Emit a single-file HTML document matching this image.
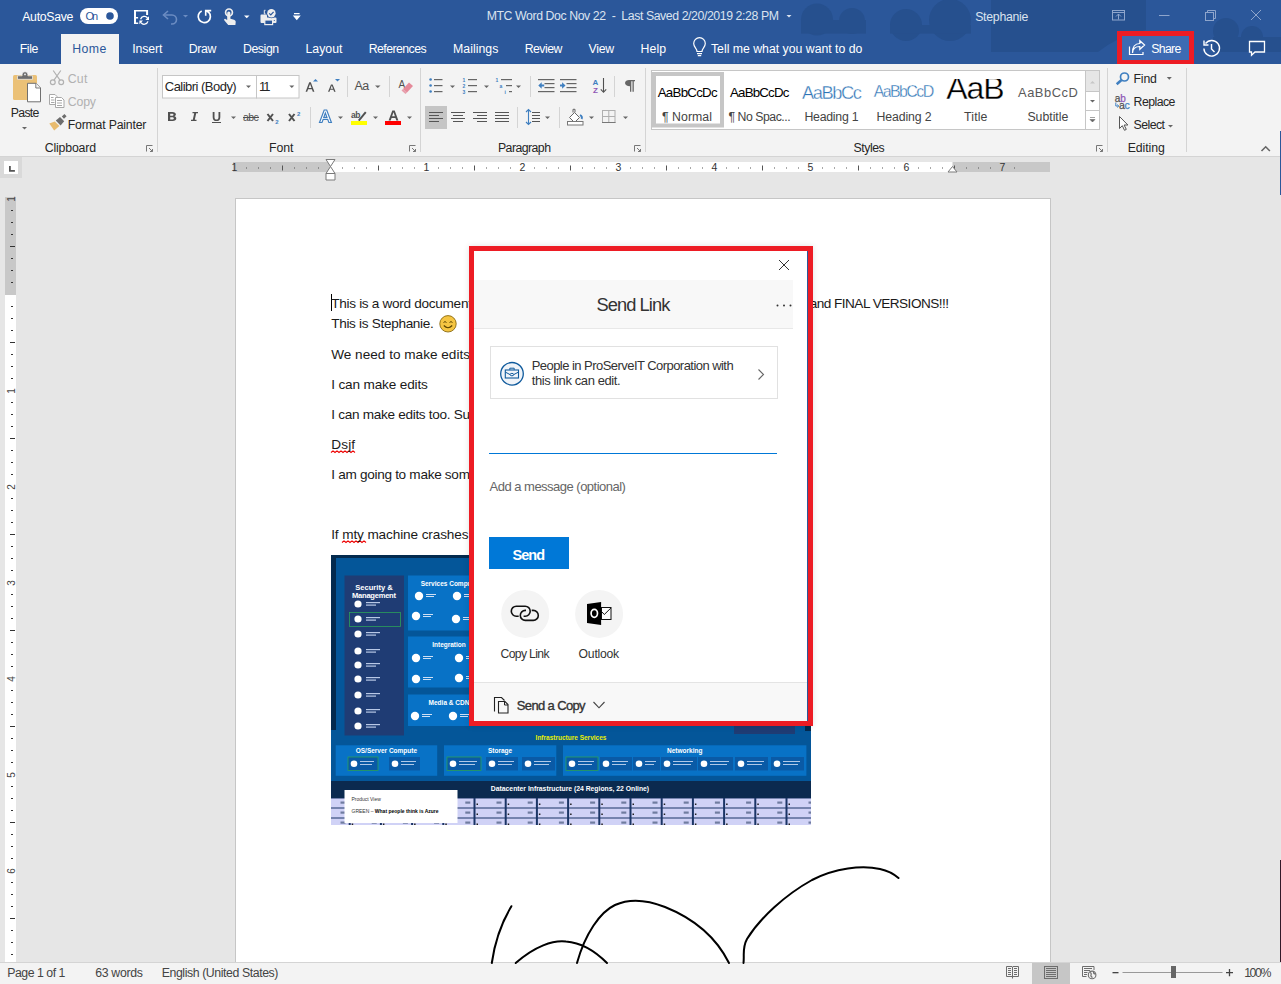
<!DOCTYPE html>
<html><head><meta charset="utf-8">
<style>
*{margin:0;padding:0;box-sizing:border-box}
html,body{width:1281px;height:984px;overflow:hidden;background:#e6e6e6;font-family:"Liberation Sans",sans-serif;position:relative}
.a{position:absolute;white-space:pre}
.r{position:absolute}
svg{position:absolute;overflow:visible}
</style></head><body>
<div class="r" style="left:0;top:0;width:1281px;height:64px;background:#2b579a"></div>
<div class="r" style="left:0;top:64px;width:1281px;height:93px;background:#f3f3f3;border-bottom:1px solid #d4d4d4"></div>
<div class="r" style="left:61px;top:34px;width:58px;height:30px;background:#f3f3f3"></div>
<div class="r" style="left:235px;top:198px;width:816px;height:770px;background:#fff;border:1px solid #c6c6c6"></div>
<div class="r" style="left:0;top:962px;width:1281px;height:22px;background:#f3f3f3;border-top:1px solid #d4d4d4"></div>
<svg style="left:0;top:157px;overflow:hidden" width="1281" height="805" viewBox="0 157 1281 805"><rect x="0" y="157" width="22" height="21" fill="#d9d9d9"/><rect x="4" y="161" width="14" height="13" fill="#fff"/><path d="M9.9 166v4.9h5" fill="none" stroke="#555" stroke-width="1.8"/><rect x="233" y="162" width="817" height="10" fill="#c8c8c8"/><rect x="330.5" y="162" width="622" height="10" fill="#fff"/><rect x="246.0" y="167.5" width="1" height="1" fill="#555"/><rect x="258.0" y="167.5" width="1" height="1" fill="#555"/><rect x="270.0" y="167.5" width="1" height="1" fill="#555"/><rect x="282.0" y="165.5" width="1" height="5" fill="#555"/><rect x="294.0" y="167.5" width="1" height="1" fill="#555"/><rect x="306.0" y="167.5" width="1" height="1" fill="#555"/><rect x="318.0" y="167.5" width="1" height="1" fill="#555"/><rect x="342.0" y="167.5" width="1" height="1" fill="#555"/><rect x="354.0" y="167.5" width="1" height="1" fill="#555"/><rect x="366.0" y="167.5" width="1" height="1" fill="#555"/><rect x="378.0" y="165.5" width="1" height="5" fill="#555"/><rect x="390.0" y="167.5" width="1" height="1" fill="#555"/><rect x="402.0" y="167.5" width="1" height="1" fill="#555"/><rect x="414.0" y="167.5" width="1" height="1" fill="#555"/><rect x="438.0" y="167.5" width="1" height="1" fill="#555"/><rect x="450.0" y="167.5" width="1" height="1" fill="#555"/><rect x="462.0" y="167.5" width="1" height="1" fill="#555"/><rect x="474.0" y="165.5" width="1" height="5" fill="#555"/><rect x="486.0" y="167.5" width="1" height="1" fill="#555"/><rect x="498.0" y="167.5" width="1" height="1" fill="#555"/><rect x="510.0" y="167.5" width="1" height="1" fill="#555"/><rect x="534.0" y="167.5" width="1" height="1" fill="#555"/><rect x="546.0" y="167.5" width="1" height="1" fill="#555"/><rect x="558.0" y="167.5" width="1" height="1" fill="#555"/><rect x="570.0" y="165.5" width="1" height="5" fill="#555"/><rect x="582.0" y="167.5" width="1" height="1" fill="#555"/><rect x="594.0" y="167.5" width="1" height="1" fill="#555"/><rect x="606.0" y="167.5" width="1" height="1" fill="#555"/><rect x="630.0" y="167.5" width="1" height="1" fill="#555"/><rect x="642.0" y="167.5" width="1" height="1" fill="#555"/><rect x="654.0" y="167.5" width="1" height="1" fill="#555"/><rect x="666.0" y="165.5" width="1" height="5" fill="#555"/><rect x="678.0" y="167.5" width="1" height="1" fill="#555"/><rect x="690.0" y="167.5" width="1" height="1" fill="#555"/><rect x="702.0" y="167.5" width="1" height="1" fill="#555"/><rect x="726.0" y="167.5" width="1" height="1" fill="#555"/><rect x="738.0" y="167.5" width="1" height="1" fill="#555"/><rect x="750.0" y="167.5" width="1" height="1" fill="#555"/><rect x="762.0" y="165.5" width="1" height="5" fill="#555"/><rect x="774.0" y="167.5" width="1" height="1" fill="#555"/><rect x="786.0" y="167.5" width="1" height="1" fill="#555"/><rect x="798.0" y="167.5" width="1" height="1" fill="#555"/><rect x="822.0" y="167.5" width="1" height="1" fill="#555"/><rect x="834.0" y="167.5" width="1" height="1" fill="#555"/><rect x="846.0" y="167.5" width="1" height="1" fill="#555"/><rect x="858.0" y="165.5" width="1" height="5" fill="#555"/><rect x="870.0" y="167.5" width="1" height="1" fill="#555"/><rect x="882.0" y="167.5" width="1" height="1" fill="#555"/><rect x="894.0" y="167.5" width="1" height="1" fill="#555"/><rect x="918.0" y="167.5" width="1" height="1" fill="#555"/><rect x="930.0" y="167.5" width="1" height="1" fill="#555"/><rect x="942.0" y="167.5" width="1" height="1" fill="#555"/><rect x="954.0" y="165.5" width="1" height="5" fill="#555"/><rect x="966.0" y="167.5" width="1" height="1" fill="#555"/><rect x="978.0" y="167.5" width="1" height="1" fill="#555"/><rect x="990.0" y="167.5" width="1" height="1" fill="#555"/><rect x="1014.0" y="167.5" width="1" height="1" fill="#555"/><text x="234.5" y="171" font-family="Liberation Sans" font-size="10.5" fill="#333" text-anchor="middle">1</text><text x="426.5" y="171" font-family="Liberation Sans" font-size="10.5" fill="#333" text-anchor="middle">1</text><text x="522.5" y="171" font-family="Liberation Sans" font-size="10.5" fill="#333" text-anchor="middle">2</text><text x="618.5" y="171" font-family="Liberation Sans" font-size="10.5" fill="#333" text-anchor="middle">3</text><text x="714.5" y="171" font-family="Liberation Sans" font-size="10.5" fill="#333" text-anchor="middle">4</text><text x="810.5" y="171" font-family="Liberation Sans" font-size="10.5" fill="#333" text-anchor="middle">5</text><text x="906.5" y="171" font-family="Liberation Sans" font-size="10.5" fill="#333" text-anchor="middle">6</text><text x="1002.5" y="171" font-family="Liberation Sans" font-size="10.5" fill="#333" text-anchor="middle">7</text><path d="M326 159.5h9l-4.5 7zM326 173.5h9l-4.5-7zM326 173.5h9v6.5h-9z" fill="#fff" stroke="#7a7a7a" stroke-width="1"/><path d="M948 172h9l-4.5-5.5z" fill="#fff" stroke="#7a7a7a" stroke-width="1"/><rect x="5" y="197" width="11" height="98" fill="#c8c8c8"/><rect x="5" y="295" width="11" height="667" fill="#fff"/><rect x="11" y="210.0" width="2" height="1" fill="#333"/><rect x="11" y="222.0" width="2" height="1" fill="#333"/><rect x="11" y="234.0" width="2" height="1" fill="#333"/><rect x="10" y="246.0" width="5" height="1" fill="#333"/><rect x="11" y="258.0" width="2" height="1" fill="#333"/><rect x="11" y="270.0" width="2" height="1" fill="#333"/><rect x="11" y="282.0" width="2" height="1" fill="#333"/><rect x="11" y="306.0" width="2" height="1" fill="#333"/><rect x="11" y="318.0" width="2" height="1" fill="#333"/><rect x="11" y="330.0" width="2" height="1" fill="#333"/><rect x="10" y="342.0" width="5" height="1" fill="#333"/><rect x="11" y="354.0" width="2" height="1" fill="#333"/><rect x="11" y="366.0" width="2" height="1" fill="#333"/><rect x="11" y="378.0" width="2" height="1" fill="#333"/><rect x="11" y="402.0" width="2" height="1" fill="#333"/><rect x="11" y="414.0" width="2" height="1" fill="#333"/><rect x="11" y="426.0" width="2" height="1" fill="#333"/><rect x="10" y="438.0" width="5" height="1" fill="#333"/><rect x="11" y="450.0" width="2" height="1" fill="#333"/><rect x="11" y="462.0" width="2" height="1" fill="#333"/><rect x="11" y="474.0" width="2" height="1" fill="#333"/><rect x="11" y="498.0" width="2" height="1" fill="#333"/><rect x="11" y="510.0" width="2" height="1" fill="#333"/><rect x="11" y="522.0" width="2" height="1" fill="#333"/><rect x="10" y="534.0" width="5" height="1" fill="#333"/><rect x="11" y="546.0" width="2" height="1" fill="#333"/><rect x="11" y="558.0" width="2" height="1" fill="#333"/><rect x="11" y="570.0" width="2" height="1" fill="#333"/><rect x="11" y="594.0" width="2" height="1" fill="#333"/><rect x="11" y="606.0" width="2" height="1" fill="#333"/><rect x="11" y="618.0" width="2" height="1" fill="#333"/><rect x="10" y="630.0" width="5" height="1" fill="#333"/><rect x="11" y="642.0" width="2" height="1" fill="#333"/><rect x="11" y="654.0" width="2" height="1" fill="#333"/><rect x="11" y="666.0" width="2" height="1" fill="#333"/><rect x="11" y="690.0" width="2" height="1" fill="#333"/><rect x="11" y="702.0" width="2" height="1" fill="#333"/><rect x="11" y="714.0" width="2" height="1" fill="#333"/><rect x="10" y="726.0" width="5" height="1" fill="#333"/><rect x="11" y="738.0" width="2" height="1" fill="#333"/><rect x="11" y="750.0" width="2" height="1" fill="#333"/><rect x="11" y="762.0" width="2" height="1" fill="#333"/><rect x="11" y="786.0" width="2" height="1" fill="#333"/><rect x="11" y="798.0" width="2" height="1" fill="#333"/><rect x="11" y="810.0" width="2" height="1" fill="#333"/><rect x="10" y="822.0" width="5" height="1" fill="#333"/><rect x="11" y="834.0" width="2" height="1" fill="#333"/><rect x="11" y="846.0" width="2" height="1" fill="#333"/><rect x="11" y="858.0" width="2" height="1" fill="#333"/><rect x="11" y="882.0" width="2" height="1" fill="#333"/><rect x="11" y="894.0" width="2" height="1" fill="#333"/><rect x="11" y="906.0" width="2" height="1" fill="#333"/><rect x="10" y="918.0" width="5" height="1" fill="#333"/><rect x="11" y="930.0" width="2" height="1" fill="#333"/><rect x="11" y="942.0" width="2" height="1" fill="#333"/><rect x="11" y="954.0" width="2" height="1" fill="#333"/><text x="0" y="0" transform="translate(15.2 199.0) rotate(-90)" font-family="Liberation Sans" font-size="10" fill="#444" text-anchor="middle">1</text><text x="0" y="0" transform="translate(15.2 391.0) rotate(-90)" font-family="Liberation Sans" font-size="10" fill="#444" text-anchor="middle">1</text><text x="0" y="0" transform="translate(15.2 487.0) rotate(-90)" font-family="Liberation Sans" font-size="10" fill="#444" text-anchor="middle">2</text><text x="0" y="0" transform="translate(15.2 583.0) rotate(-90)" font-family="Liberation Sans" font-size="10" fill="#444" text-anchor="middle">3</text><text x="0" y="0" transform="translate(15.2 679.0) rotate(-90)" font-family="Liberation Sans" font-size="10" fill="#444" text-anchor="middle">4</text><text x="0" y="0" transform="translate(15.2 775.0) rotate(-90)" font-family="Liberation Sans" font-size="10" fill="#444" text-anchor="middle">5</text><text x="0" y="0" transform="translate(15.2 871.0) rotate(-90)" font-family="Liberation Sans" font-size="10" fill="#444" text-anchor="middle">6</text></svg>
<div class="r" style="left:1279.5px;top:131px;width:2px;height:64px;background:#2b579a"></div><div class="r" style="left:1280px;top:860px;width:1px;height:102px;background:#301828"></div>
<svg style="left:0;top:0" width="1" height="1">
<rect x="331" y="294" width="1" height="17" fill="#000"/>
<circle cx="448" cy="323.8" r="8.2" fill="#f5c542" stroke="#8a6a10" stroke-width="0.9"/>
<path d="M443.5 322.5q1.5-1.8 3 0M449.5 322.5q1.5-1.8 3 0" fill="none" stroke="#5a4300" stroke-width="1"/>
<path d="M443.8 325.5q4.2 4.5 8.4 0" fill="none" stroke="#5a4300" stroke-width="1.1"/>
<path d="M331 452.5l2-1.6 2 1.6 2-1.6 2 1.6 2-1.6 2 1.6 2-1.6 2 1.6 2-1.6 2 1.6 2-1.6 2 1.6" fill="none" stroke="#e00" stroke-width="1.2"/>
<path d="M342 542.5l2-1.6 2 1.6 2-1.6 2 1.6 2-1.6 2 1.6 2-1.6 2 1.6 2-1.6 2 1.6 2-1.6 2 1.6" fill="none" stroke="#e00" stroke-width="1.2"/>
<g fill="none" stroke="#000" stroke-width="2" stroke-linecap="round">
<path d="M511.4 906.2C502 922 495 940 491.8 963"/>
<path d="M515.7 963C535 946 553 940 566 941.5C585 943 598 954 607 963"/>
<path d="M577 963C585 934 600 912 615 905C628 899 645 899 665 907C690 917 715 935 729 963"/>
<path d="M743.5 963C744.5 955 742 948 747 939C760 918 785 895 812 880C835 868 862 865 880 869C889 871 895 875 898.5 878"/>
</g>
</svg>
<svg style="left:331px;top:555px;overflow:hidden" width="480" height="270" viewBox="331 555 480 270"><rect x="331" y="555" width="480" height="270" fill="#032a4e"/><rect x="336" y="558" width="469" height="223" fill="#045699"/><rect x="344.5" y="575.5" width="59.5" height="160" fill="#1f3c74"/><text x="374" y="590" font-family="Liberation Sans" font-size="7.6" font-weight="bold" fill="#fff" text-anchor="middle">Security &amp;</text><text x="374" y="598" font-family="Liberation Sans" font-size="7.6" font-weight="bold" fill="#fff" text-anchor="middle" textLength="44">Management</text><circle cx="358" cy="604" r="3.6" fill="#fff"/><rect x="366" y="602" width="14" height="1.2" fill="#b8c8e6"/><rect x="366" y="604.5" width="10" height="1.2" fill="#b8c8e6"/><circle cx="358" cy="619" r="3.6" fill="#fff"/><rect x="366" y="617" width="14" height="1.2" fill="#b8c8e6"/><rect x="366" y="619.5" width="10" height="1.2" fill="#b8c8e6"/><circle cx="358" cy="634" r="3.6" fill="#fff"/><rect x="366" y="632" width="14" height="1.2" fill="#b8c8e6"/><rect x="366" y="634.5" width="10" height="1.2" fill="#b8c8e6"/><circle cx="358" cy="651" r="3.6" fill="#fff"/><rect x="366" y="649" width="14" height="1.2" fill="#b8c8e6"/><rect x="366" y="651.5" width="10" height="1.2" fill="#b8c8e6"/><circle cx="358" cy="665" r="3.6" fill="#fff"/><rect x="366" y="663" width="14" height="1.2" fill="#b8c8e6"/><rect x="366" y="665.5" width="10" height="1.2" fill="#b8c8e6"/><circle cx="358" cy="679" r="3.6" fill="#fff"/><rect x="366" y="677" width="14" height="1.2" fill="#b8c8e6"/><rect x="366" y="679.5" width="10" height="1.2" fill="#b8c8e6"/><circle cx="358" cy="695" r="3.6" fill="#fff"/><rect x="366" y="693" width="14" height="1.2" fill="#b8c8e6"/><rect x="366" y="695.5" width="10" height="1.2" fill="#b8c8e6"/><circle cx="358" cy="711" r="3.6" fill="#fff"/><rect x="366" y="709" width="14" height="1.2" fill="#b8c8e6"/><rect x="366" y="711.5" width="10" height="1.2" fill="#b8c8e6"/><circle cx="358" cy="726" r="3.6" fill="#fff"/><rect x="366" y="724" width="14" height="1.2" fill="#b8c8e6"/><rect x="366" y="726.5" width="10" height="1.2" fill="#b8c8e6"/><rect x="349.5" y="612.5" width="51" height="14" fill="none" stroke="#2aa05a" stroke-width="0.8"/><rect x="408" y="575.5" width="140" height="55.0" fill="#0872c6"/><text x="449" y="585.5" font-family="Liberation Sans" font-size="6.5" font-weight="bold" fill="#fff" text-anchor="middle">Services Compute</text><rect x="408" y="636.5" width="140" height="51.0" fill="#0872c6"/><text x="449" y="646.5" font-family="Liberation Sans" font-size="6.5" font-weight="bold" fill="#fff" text-anchor="middle">Integration</text><rect x="408" y="694.5" width="140" height="31.5" fill="#0872c6"/><text x="449" y="704.5" font-family="Liberation Sans" font-size="6.5" font-weight="bold" fill="#fff" text-anchor="middle">Media &amp; CDN</text><circle cx="419" cy="596" r="4.2" fill="#fff"/><rect x="426" y="594" width="10" height="1" fill="#cfe0f5"/><rect x="426" y="596" width="8" height="1" fill="#cfe0f5"/><circle cx="457" cy="596" r="4.2" fill="#fff"/><rect x="464" y="594" width="10" height="1" fill="#cfe0f5"/><rect x="464" y="596" width="8" height="1" fill="#cfe0f5"/><circle cx="416" cy="616" r="4.2" fill="#fff"/><rect x="423" y="614" width="10" height="1" fill="#cfe0f5"/><rect x="423" y="616" width="8" height="1" fill="#cfe0f5"/><circle cx="456" cy="619" r="4.2" fill="#fff"/><rect x="463" y="617" width="10" height="1" fill="#cfe0f5"/><rect x="463" y="619" width="8" height="1" fill="#cfe0f5"/><circle cx="416" cy="658" r="4.2" fill="#fff"/><rect x="423" y="656" width="10" height="1" fill="#cfe0f5"/><rect x="423" y="658" width="8" height="1" fill="#cfe0f5"/><circle cx="459" cy="658" r="4.2" fill="#fff"/><rect x="466" y="656" width="10" height="1" fill="#cfe0f5"/><rect x="466" y="658" width="8" height="1" fill="#cfe0f5"/><circle cx="416" cy="679" r="4.2" fill="#fff"/><rect x="423" y="677" width="10" height="1" fill="#cfe0f5"/><rect x="423" y="679" width="8" height="1" fill="#cfe0f5"/><circle cx="459" cy="678" r="4.2" fill="#fff"/><rect x="466" y="676" width="10" height="1" fill="#cfe0f5"/><rect x="466" y="678" width="8" height="1" fill="#cfe0f5"/><circle cx="415" cy="716" r="4.2" fill="#fff"/><rect x="422" y="714" width="10" height="1" fill="#cfe0f5"/><rect x="422" y="716" width="8" height="1" fill="#cfe0f5"/><circle cx="453" cy="716" r="4.2" fill="#fff"/><rect x="460" y="714" width="10" height="1" fill="#cfe0f5"/><rect x="460" y="716" width="8" height="1" fill="#cfe0f5"/><rect x="734" y="722" width="61" height="12" fill="#1f3c74"/><rect x="805" y="555" width="6" height="176" fill="#032a4e"/><rect x="331" y="730" width="480" height="51" fill="#045699"/><rect x="344.5" y="730" width="59.5" height="5.5" fill="#1f3c74"/><rect x="734" y="730" width="61" height="4" fill="#1f3c74"/><rect x="805" y="730" width="6" height="1" fill="#032a4e"/><text x="571" y="740" font-family="Liberation Sans" font-size="6.5" font-weight="bold" fill="#e8f000" text-anchor="middle">Infrastructure Services</text><rect x="335.7" y="745.3" width="101.5" height="30.5" fill="#0872c6"/><text x="386.4" y="753" font-family="Liberation Sans" font-size="6.5" font-weight="bold" fill="#fff" text-anchor="middle">OS/Server Compute</text><rect x="348" y="757" width="30" height="13.5" fill="#0a5aa6"/><circle cx="354" cy="763.7" r="3.3" fill="#fff"/><rect x="360" y="761" width="14" height="1" fill="#b0c8e8"/><rect x="360" y="764" width="12" height="1" fill="#b0c8e8"/><rect x="389" y="757" width="31" height="13.5" fill="#0a5aa6"/><circle cx="395" cy="763.7" r="3.3" fill="#fff"/><rect x="401" y="761" width="15" height="1" fill="#b0c8e8"/><rect x="401" y="764" width="13" height="1" fill="#b0c8e8"/><rect x="444" y="745.3" width="112.29999999999995" height="30.5" fill="#0872c6"/><text x="500.1" y="753" font-family="Liberation Sans" font-size="6.5" font-weight="bold" fill="#fff" text-anchor="middle">Storage</text><rect x="447" y="757" width="34" height="13.5" fill="#0a5aa6"/><circle cx="453" cy="763.7" r="3.3" fill="#fff"/><rect x="459" y="761" width="18" height="1" fill="#b0c8e8"/><rect x="459" y="764" width="16" height="1" fill="#b0c8e8"/><rect x="486" y="757" width="32" height="13.5" fill="#0a5aa6"/><circle cx="492" cy="763.7" r="3.3" fill="#fff"/><rect x="498" y="761" width="16" height="1" fill="#b0c8e8"/><rect x="498" y="764" width="14" height="1" fill="#b0c8e8"/><rect x="522" y="757" width="33" height="13.5" fill="#0a5aa6"/><circle cx="528" cy="763.7" r="3.3" fill="#fff"/><rect x="534" y="761" width="17" height="1" fill="#b0c8e8"/><rect x="534" y="764" width="15" height="1" fill="#b0c8e8"/><rect x="563" y="745.3" width="243.39999999999998" height="30.5" fill="#0872c6"/><text x="684.7" y="753" font-family="Liberation Sans" font-size="6.5" font-weight="bold" fill="#fff" text-anchor="middle">Networking</text><rect x="566" y="757" width="32" height="13.5" fill="#0a5aa6"/><circle cx="572" cy="763.7" r="3.3" fill="#fff"/><rect x="578" y="761" width="16" height="1" fill="#b0c8e8"/><rect x="578" y="764" width="14" height="1" fill="#b0c8e8"/><rect x="600" y="757" width="32" height="13.5" fill="#0a5aa6"/><circle cx="606" cy="763.7" r="3.3" fill="#fff"/><rect x="612" y="761" width="16" height="1" fill="#b0c8e8"/><rect x="612" y="764" width="14" height="1" fill="#b0c8e8"/><rect x="633" y="757" width="27" height="13.5" fill="#0a5aa6"/><circle cx="639" cy="763.7" r="3.3" fill="#fff"/><rect x="645" y="761" width="11" height="1" fill="#b0c8e8"/><rect x="645" y="764" width="9" height="1" fill="#b0c8e8"/><rect x="661" y="757" width="36" height="13.5" fill="#0a5aa6"/><circle cx="667" cy="763.7" r="3.3" fill="#fff"/><rect x="673" y="761" width="20" height="1" fill="#b0c8e8"/><rect x="673" y="764" width="18" height="1" fill="#b0c8e8"/><rect x="698" y="757" width="35" height="13.5" fill="#0a5aa6"/><circle cx="704" cy="763.7" r="3.3" fill="#fff"/><rect x="710" y="761" width="19" height="1" fill="#b0c8e8"/><rect x="710" y="764" width="17" height="1" fill="#b0c8e8"/><rect x="735" y="757" width="33" height="13.5" fill="#0a5aa6"/><circle cx="741" cy="763.7" r="3.3" fill="#fff"/><rect x="747" y="761" width="17" height="1" fill="#b0c8e8"/><rect x="747" y="764" width="15" height="1" fill="#b0c8e8"/><rect x="771" y="757" width="33" height="13.5" fill="#0a5aa6"/><circle cx="777" cy="763.7" r="3.3" fill="#fff"/><rect x="783" y="761" width="17" height="1" fill="#b0c8e8"/><rect x="783" y="764" width="15" height="1" fill="#b0c8e8"/><rect x="348" y="757" width="30" height="13.5" fill="none" stroke="#2aa05a" stroke-width="0.8"/><rect x="447" y="757" width="34" height="13.5" fill="none" stroke="#2aa05a" stroke-width="0.8"/><rect x="566" y="757" width="32" height="13.5" fill="none" stroke="#2aa05a" stroke-width="0.8"/><rect x="331" y="781" width="480" height="17" fill="#0b2a4f"/><text x="570" y="790.5" font-family="Liberation Sans" font-size="6.8" font-weight="bold" fill="#fff" text-anchor="middle">Datacenter Infrastructure (24 Regions, 22 Online)</text><rect x="331" y="798" width="480" height="27" fill="#1b3566"/><rect x="288.3" y="798.5" width="29.2" height="9" fill="#d0d2f6"/><rect x="309.3" y="801.5" width="5" height="2.2" fill="#707ca0"/><rect x="289.3" y="803.5" width="1.5" height="1.5" fill="#222"/><rect x="319.5" y="798.5" width="29.2" height="9" fill="#d0d2f6"/><rect x="340.5" y="801.5" width="5" height="2.2" fill="#707ca0"/><rect x="320.5" y="803.5" width="1.5" height="1.5" fill="#222"/><rect x="350.7" y="798.5" width="29.2" height="9" fill="#d0d2f6"/><rect x="371.7" y="801.5" width="5" height="2.2" fill="#707ca0"/><rect x="351.7" y="803.5" width="1.5" height="1.5" fill="#222"/><rect x="381.9" y="798.5" width="29.2" height="9" fill="#d0d2f6"/><rect x="402.9" y="801.5" width="5" height="2.2" fill="#707ca0"/><rect x="382.9" y="803.5" width="1.5" height="1.5" fill="#222"/><rect x="413.1" y="798.5" width="29.2" height="9" fill="#d0d2f6"/><rect x="434.1" y="801.5" width="5" height="2.2" fill="#707ca0"/><rect x="414.1" y="803.5" width="1.5" height="1.5" fill="#222"/><rect x="444.3" y="798.5" width="29.2" height="9" fill="#d0d2f6"/><rect x="465.3" y="801.5" width="5" height="2.2" fill="#707ca0"/><rect x="445.3" y="803.5" width="1.5" height="1.5" fill="#222"/><rect x="475.5" y="798.5" width="29.2" height="9" fill="#d0d2f6"/><rect x="496.5" y="801.5" width="5" height="2.2" fill="#707ca0"/><rect x="476.5" y="803.5" width="1.5" height="1.5" fill="#222"/><rect x="506.7" y="798.5" width="29.2" height="9" fill="#d0d2f6"/><rect x="527.7" y="801.5" width="5" height="2.2" fill="#707ca0"/><rect x="507.7" y="803.5" width="1.5" height="1.5" fill="#222"/><rect x="537.9" y="798.5" width="29.2" height="9" fill="#d0d2f6"/><rect x="558.9" y="801.5" width="5" height="2.2" fill="#707ca0"/><rect x="538.9" y="803.5" width="1.5" height="1.5" fill="#222"/><rect x="569.1" y="798.5" width="29.2" height="9" fill="#d0d2f6"/><rect x="590.1" y="801.5" width="5" height="2.2" fill="#707ca0"/><rect x="570.1" y="803.5" width="1.5" height="1.5" fill="#222"/><rect x="600.3" y="798.5" width="29.2" height="9" fill="#d0d2f6"/><rect x="621.3" y="801.5" width="5" height="2.2" fill="#707ca0"/><rect x="601.3" y="803.5" width="1.5" height="1.5" fill="#222"/><rect x="631.5" y="798.5" width="29.2" height="9" fill="#d0d2f6"/><rect x="652.5" y="801.5" width="5" height="2.2" fill="#707ca0"/><rect x="632.5" y="803.5" width="1.5" height="1.5" fill="#222"/><rect x="662.7" y="798.5" width="29.2" height="9" fill="#d0d2f6"/><rect x="683.7" y="801.5" width="5" height="2.2" fill="#707ca0"/><rect x="663.7" y="803.5" width="1.5" height="1.5" fill="#222"/><rect x="693.9" y="798.5" width="29.2" height="9" fill="#d0d2f6"/><rect x="714.9" y="801.5" width="5" height="2.2" fill="#707ca0"/><rect x="694.9" y="803.5" width="1.5" height="1.5" fill="#222"/><rect x="725.1" y="798.5" width="29.2" height="9" fill="#d0d2f6"/><rect x="746.1" y="801.5" width="5" height="2.2" fill="#707ca0"/><rect x="726.1" y="803.5" width="1.5" height="1.5" fill="#222"/><rect x="756.3" y="798.5" width="29.2" height="9" fill="#d0d2f6"/><rect x="777.3" y="801.5" width="5" height="2.2" fill="#707ca0"/><rect x="757.3" y="803.5" width="1.5" height="1.5" fill="#222"/><rect x="787.5" y="798.5" width="29.2" height="9" fill="#d0d2f6"/><rect x="808.5" y="801.5" width="5" height="2.2" fill="#707ca0"/><rect x="788.5" y="803.5" width="1.5" height="1.5" fill="#222"/><rect x="288.3" y="808.5" width="29.2" height="9" fill="#d0d2f6"/><rect x="309.3" y="811.5" width="5" height="2.2" fill="#707ca0"/><rect x="289.3" y="813.5" width="1.5" height="1.5" fill="#222"/><rect x="319.5" y="808.5" width="29.2" height="9" fill="#d0d2f6"/><rect x="340.5" y="811.5" width="5" height="2.2" fill="#707ca0"/><rect x="320.5" y="813.5" width="1.5" height="1.5" fill="#222"/><rect x="350.7" y="808.5" width="29.2" height="9" fill="#d0d2f6"/><rect x="371.7" y="811.5" width="5" height="2.2" fill="#707ca0"/><rect x="351.7" y="813.5" width="1.5" height="1.5" fill="#222"/><rect x="381.9" y="808.5" width="29.2" height="9" fill="#d0d2f6"/><rect x="402.9" y="811.5" width="5" height="2.2" fill="#707ca0"/><rect x="382.9" y="813.5" width="1.5" height="1.5" fill="#222"/><rect x="413.1" y="808.5" width="29.2" height="9" fill="#d0d2f6"/><rect x="434.1" y="811.5" width="5" height="2.2" fill="#707ca0"/><rect x="414.1" y="813.5" width="1.5" height="1.5" fill="#222"/><rect x="444.3" y="808.5" width="29.2" height="9" fill="#d0d2f6"/><rect x="465.3" y="811.5" width="5" height="2.2" fill="#707ca0"/><rect x="445.3" y="813.5" width="1.5" height="1.5" fill="#222"/><rect x="475.5" y="808.5" width="29.2" height="9" fill="#d0d2f6"/><rect x="496.5" y="811.5" width="5" height="2.2" fill="#707ca0"/><rect x="476.5" y="813.5" width="1.5" height="1.5" fill="#222"/><rect x="506.7" y="808.5" width="29.2" height="9" fill="#d0d2f6"/><rect x="527.7" y="811.5" width="5" height="2.2" fill="#707ca0"/><rect x="507.7" y="813.5" width="1.5" height="1.5" fill="#222"/><rect x="537.9" y="808.5" width="29.2" height="9" fill="#d0d2f6"/><rect x="558.9" y="811.5" width="5" height="2.2" fill="#707ca0"/><rect x="538.9" y="813.5" width="1.5" height="1.5" fill="#222"/><rect x="569.1" y="808.5" width="29.2" height="9" fill="#d0d2f6"/><rect x="590.1" y="811.5" width="5" height="2.2" fill="#707ca0"/><rect x="570.1" y="813.5" width="1.5" height="1.5" fill="#222"/><rect x="600.3" y="808.5" width="29.2" height="9" fill="#d0d2f6"/><rect x="621.3" y="811.5" width="5" height="2.2" fill="#707ca0"/><rect x="601.3" y="813.5" width="1.5" height="1.5" fill="#222"/><rect x="631.5" y="808.5" width="29.2" height="9" fill="#d0d2f6"/><rect x="652.5" y="811.5" width="5" height="2.2" fill="#707ca0"/><rect x="632.5" y="813.5" width="1.5" height="1.5" fill="#222"/><rect x="662.7" y="808.5" width="29.2" height="9" fill="#d0d2f6"/><rect x="683.7" y="811.5" width="5" height="2.2" fill="#707ca0"/><rect x="663.7" y="813.5" width="1.5" height="1.5" fill="#222"/><rect x="693.9" y="808.5" width="29.2" height="9" fill="#d0d2f6"/><rect x="714.9" y="811.5" width="5" height="2.2" fill="#707ca0"/><rect x="694.9" y="813.5" width="1.5" height="1.5" fill="#222"/><rect x="725.1" y="808.5" width="29.2" height="9" fill="#d0d2f6"/><rect x="746.1" y="811.5" width="5" height="2.2" fill="#707ca0"/><rect x="726.1" y="813.5" width="1.5" height="1.5" fill="#222"/><rect x="756.3" y="808.5" width="29.2" height="9" fill="#d0d2f6"/><rect x="777.3" y="811.5" width="5" height="2.2" fill="#707ca0"/><rect x="757.3" y="813.5" width="1.5" height="1.5" fill="#222"/><rect x="787.5" y="808.5" width="29.2" height="9" fill="#d0d2f6"/><rect x="808.5" y="811.5" width="5" height="2.2" fill="#707ca0"/><rect x="788.5" y="813.5" width="1.5" height="1.5" fill="#222"/><rect x="288.3" y="818.5" width="29.2" height="9" fill="#d0d2f6"/><rect x="309.3" y="821.5" width="5" height="2.2" fill="#707ca0"/><rect x="289.3" y="823.5" width="1.5" height="1.5" fill="#222"/><rect x="319.5" y="818.5" width="29.2" height="9" fill="#d0d2f6"/><rect x="340.5" y="821.5" width="5" height="2.2" fill="#707ca0"/><rect x="320.5" y="823.5" width="1.5" height="1.5" fill="#222"/><rect x="350.7" y="818.5" width="29.2" height="9" fill="#d0d2f6"/><rect x="371.7" y="821.5" width="5" height="2.2" fill="#707ca0"/><rect x="351.7" y="823.5" width="1.5" height="1.5" fill="#222"/><rect x="381.9" y="818.5" width="29.2" height="9" fill="#d0d2f6"/><rect x="402.9" y="821.5" width="5" height="2.2" fill="#707ca0"/><rect x="382.9" y="823.5" width="1.5" height="1.5" fill="#222"/><rect x="413.1" y="818.5" width="29.2" height="9" fill="#d0d2f6"/><rect x="434.1" y="821.5" width="5" height="2.2" fill="#707ca0"/><rect x="414.1" y="823.5" width="1.5" height="1.5" fill="#222"/><rect x="444.3" y="818.5" width="29.2" height="9" fill="#d0d2f6"/><rect x="465.3" y="821.5" width="5" height="2.2" fill="#707ca0"/><rect x="445.3" y="823.5" width="1.5" height="1.5" fill="#222"/><rect x="475.5" y="818.5" width="29.2" height="9" fill="#d0d2f6"/><rect x="496.5" y="821.5" width="5" height="2.2" fill="#707ca0"/><rect x="476.5" y="823.5" width="1.5" height="1.5" fill="#222"/><rect x="506.7" y="818.5" width="29.2" height="9" fill="#d0d2f6"/><rect x="527.7" y="821.5" width="5" height="2.2" fill="#707ca0"/><rect x="507.7" y="823.5" width="1.5" height="1.5" fill="#222"/><rect x="537.9" y="818.5" width="29.2" height="9" fill="#d0d2f6"/><rect x="558.9" y="821.5" width="5" height="2.2" fill="#707ca0"/><rect x="538.9" y="823.5" width="1.5" height="1.5" fill="#222"/><rect x="569.1" y="818.5" width="29.2" height="9" fill="#d0d2f6"/><rect x="590.1" y="821.5" width="5" height="2.2" fill="#707ca0"/><rect x="570.1" y="823.5" width="1.5" height="1.5" fill="#222"/><rect x="600.3" y="818.5" width="29.2" height="9" fill="#d0d2f6"/><rect x="621.3" y="821.5" width="5" height="2.2" fill="#707ca0"/><rect x="601.3" y="823.5" width="1.5" height="1.5" fill="#222"/><rect x="631.5" y="818.5" width="29.2" height="9" fill="#d0d2f6"/><rect x="652.5" y="821.5" width="5" height="2.2" fill="#707ca0"/><rect x="632.5" y="823.5" width="1.5" height="1.5" fill="#222"/><rect x="662.7" y="818.5" width="29.2" height="9" fill="#d0d2f6"/><rect x="683.7" y="821.5" width="5" height="2.2" fill="#707ca0"/><rect x="663.7" y="823.5" width="1.5" height="1.5" fill="#222"/><rect x="693.9" y="818.5" width="29.2" height="9" fill="#d0d2f6"/><rect x="714.9" y="821.5" width="5" height="2.2" fill="#707ca0"/><rect x="694.9" y="823.5" width="1.5" height="1.5" fill="#222"/><rect x="725.1" y="818.5" width="29.2" height="9" fill="#d0d2f6"/><rect x="746.1" y="821.5" width="5" height="2.2" fill="#707ca0"/><rect x="726.1" y="823.5" width="1.5" height="1.5" fill="#222"/><rect x="756.3" y="818.5" width="29.2" height="9" fill="#d0d2f6"/><rect x="777.3" y="821.5" width="5" height="2.2" fill="#707ca0"/><rect x="757.3" y="823.5" width="1.5" height="1.5" fill="#222"/><rect x="787.5" y="818.5" width="29.2" height="9" fill="#d0d2f6"/><rect x="808.5" y="821.5" width="5" height="2.2" fill="#707ca0"/><rect x="788.5" y="823.5" width="1.5" height="1.5" fill="#222"/><rect x="344.5" y="790" width="113" height="33" fill="#fff"/><text x="351.5" y="800.5" font-family="Liberation Sans" font-size="5" fill="#333">Product View</text><text x="351.5" y="812.5" font-family="Liberation Sans" font-size="5" fill="#333">GREEN – <tspan font-weight="bold" fill="#000">What people think is Azure</tspan></text></svg>
<div class="a" style="left:331.20px;top:296.94px;font-size:13.6px;line-height:13.6px;color:#1a1a1a;font-weight:400;font-family:'Liberation Sans',sans-serif;letter-spacing:-0.3px">This is a word document that we are</div>
<div class="a" style="left:809.70px;top:296.94px;font-size:13.6px;line-height:13.6px;color:#1a1a1a;font-weight:400;font-family:'Liberation Sans',sans-serif;letter-spacing:-0.524px;">and FINAL VERSIONS!!!</div>
<div class="a" style="left:331.20px;top:317.44px;font-size:13.6px;line-height:13.6px;color:#1a1a1a;font-weight:400;font-family:'Liberation Sans',sans-serif;letter-spacing:-0.318px;">This is Stephanie.</div>
<div class="a" style="left:331.20px;top:347.64px;font-size:13.6px;line-height:13.6px;color:#1a1a1a;font-weight:400;font-family:'Liberation Sans',sans-serif;letter-spacing:0.003px;">We need to make edits</div>
<div class="a" style="left:331.20px;top:377.54px;font-size:13.6px;line-height:13.6px;color:#1a1a1a;font-weight:400;font-family:'Liberation Sans',sans-serif;letter-spacing:-0.155px;">I can make edits</div>
<div class="a" style="left:331.20px;top:408.04px;font-size:13.6px;line-height:13.6px;color:#1a1a1a;font-weight:400;font-family:'Liberation Sans',sans-serif;letter-spacing:-0.3px">I can make edits too. Sure</div>
<div class="a" style="left:331.20px;top:437.94px;font-size:13.6px;line-height:13.6px;color:#1a1a1a;font-weight:400;font-family:'Liberation Sans',sans-serif;letter-spacing:0.179px;">Dsjf</div>
<div class="a" style="left:331.20px;top:467.84px;font-size:13.6px;line-height:13.6px;color:#1a1a1a;font-weight:400;font-family:'Liberation Sans',sans-serif;letter-spacing:-0.3px">I am going to make some</div>
<div class="a" style="left:331.20px;top:527.64px;font-size:13.6px;line-height:13.6px;color:#1a1a1a;font-weight:400;font-family:'Liberation Sans',sans-serif;letter-spacing:-0.115px;">If mty machine crashes</div>
<div class="r" style="left:469px;top:246px;width:344px;height:480px;border:5px solid #ed1c24;background:#fff;box-shadow:0 0 6px rgba(0,0,0,0.12)"></div>
<div class="r" style="left:474px;top:280px;width:319px;height:49px;background:#f8f8f8;border-bottom:1px solid #e8e8e8"></div>
<div class="r" style="left:807px;top:251px;width:1px;height:470px;background:#2b579a"></div>
<div class="r" style="left:474px;top:682px;width:333px;height:39px;background:#f8f8f8;border-top:1px solid #e4e4e4"></div>
<div class="r" style="left:489.5px;top:345.5px;width:288px;height:53px;border:1px solid #e1e1e1;background:#fff"></div>
<div class="r" style="left:489px;top:452.5px;width:288px;height:1.5px;background:#0078d7"></div>
<div class="r" style="left:489px;top:537px;width:80px;height:32px;background:#0078d7"></div>
<svg style="left:0;top:0" width="1" height="1">
<path d="M779 260l10 10M789 260l-10 10" stroke="#333" stroke-width="1"/>
<g fill="#333"><circle cx="777.5" cy="305.5" r="1"/><circle cx="784" cy="305.5" r="1"/><circle cx="790.5" cy="305.5" r="1"/></g>
<circle cx="512" cy="373.8" r="11.3" fill="#f0f4f9" stroke="#0f5a9c" stroke-width="1.3"/>
<rect x="505.3" y="370" width="13.2" height="8" fill="none" stroke="#0f5a9c" stroke-width="1.1"/>
<path d="M509.8 369.8v-1.6h4.4v1.6M505.5 372.2l4.6 2.4M518.3 372.2l-4.6 2.4" fill="none" stroke="#0f5a9c" stroke-width="1"/>
<ellipse cx="511.9" cy="374.6" rx="1.8" ry="1.2" fill="none" stroke="#0f5a9c" stroke-width="1"/>
<path d="M758.5 369.5l5 5-5 5" fill="none" stroke="#666" stroke-width="1.1"/>
<circle cx="525.2" cy="613.9" r="24" fill="#f4f4f4"/>
<circle cx="599.1" cy="613.9" r="24" fill="#f4f4f4"/>
<g fill="none" stroke="#111" stroke-width="1.6">
<path d="M518.7 616.2H516.3A5 5 0 0 1 516.3 606.2H525.2A5 5 0 0 1 525.2 616.2H523.6"/>
<path d="M531.7 610.4H533.3A5 5 0 0 1 533.3 620.4H525.3A5 5 0 0 1 525.3 610.4H526"/>
</g>
<rect x="601.5" y="607.5" width="9.5" height="12" fill="#fff" stroke="#111" stroke-width="1"/>
<path d="M601.5 611.5l2.8 3 6.7-6.6" fill="none" stroke="#111" stroke-width="1"/>
<path d="M587 604l14.1-2.1v23.1l-14.1-2.1z" fill="#000"/>
<ellipse cx="594.3" cy="613.3" rx="3.2" ry="4" fill="none" stroke="#fff" stroke-width="1.7"/>
<path d="M494.5 711.5v-14h7l3 3" fill="none" stroke="#222" stroke-width="1.1"/>
<path d="M498.5 701.5h6.5l3 3v8.5h-9.5z" fill="#f8f8f8" stroke="#222" stroke-width="1.1"/><path d="M504.5 701.5v3.5h3.5" fill="none" stroke="#222" stroke-width="1"/>
<path d="M593.5 702l5.5 5.8 5.5-5.8" fill="none" stroke="#444" stroke-width="1.1"/>
</svg>
<div class="a" style="left:596.40px;top:296.05px;font-size:18.3px;line-height:18.3px;color:#333;font-weight:400;font-family:'Liberation Sans',sans-serif;letter-spacing:-0.910px;">Send Link</div>
<div class="a" style="left:531.70px;top:358.75px;font-size:13px;line-height:13px;color:#333;font-weight:400;font-family:'Liberation Sans',sans-serif;letter-spacing:-0.545px;">People in ProServeIT Corporation with</div>
<div class="a" style="left:531.70px;top:374.15px;font-size:13px;line-height:13px;color:#333;font-weight:400;font-family:'Liberation Sans',sans-serif;letter-spacing:-0.395px;">this link can edit.</div>
<div class="a" style="left:489.60px;top:479.95px;font-size:13px;line-height:13px;color:#666;font-weight:400;font-family:'Liberation Sans',sans-serif;letter-spacing:-0.515px;">Add a message (optional)</div>
<div class="a" style="left:512.60px;top:547.57px;font-size:14.5px;line-height:14.5px;color:#fff;font-weight:700;font-family:'Liberation Sans',sans-serif;letter-spacing:-1.001px;">Send</div>
<div class="a" style="left:500.50px;top:648.43px;font-size:12.2px;line-height:12.2px;color:#333;font-weight:400;font-family:'Liberation Sans',sans-serif;letter-spacing:-0.648px;">Copy Link</div>
<div class="a" style="left:578.60px;top:648.43px;font-size:12.2px;line-height:12.2px;color:#333;font-weight:400;font-family:'Liberation Sans',sans-serif;letter-spacing:-0.233px;">Outlook</div>
<div class="a" style="left:516.80px;top:698.95px;font-size:13px;line-height:13px;color:#333;font-weight:400;font-family:'Liberation Sans',sans-serif;letter-spacing:-0.637px;-webkit-text-stroke:0.35px #333;">Send a Copy</div>
<svg style="left:0;top:0;overflow:hidden" width="1281" height="64" viewBox="0 0 1281 64">
<g fill="#26508e">
<circle cx="817" cy="19.5" r="16"/><circle cx="852" cy="21" r="13"/><rect x="801" y="20" width="65" height="13.6"/>
<circle cx="906" cy="25" r="16"/><circle cx="950" cy="20" r="21"/><rect x="890" y="25" width="81" height="8.6"/>
<path d="M991 0H1146V30Q1118 36 1098 52H991z"/>
<circle cx="1226" cy="31" r="13"/><circle cx="1252" cy="37" r="11"/><rect x="1213" y="37" width="68" height="15"/>
</g>
<rect x="80" y="8" width="38" height="16" rx="8" fill="#fff"/>
<circle cx="110" cy="16" r="3.8" fill="#2b579a"/>
<!-- save -->
<path d="M134 9.9h14.1v5.1h-2v-3.6h-10.1v5.6h2.1v1.5h-2.1v3.9h2.2v1.5h-4.2z" fill="#fff"/>
<g fill="none" stroke="#fff" stroke-width="1.3"><path d="M140.6 19.2a3.9 3.9 0 0 1 6.9-1.2"/><path d="M147.9 21.4a3.9 3.9 0 0 1-6.9 1.3"/></g>
<path d="M149 16.2v3.8h-3.6zM139.4 24.3v-3.8h3.6z" fill="#fff"/>
<!-- undo disabled -->
<g fill="none" stroke="#6b8cc2" stroke-width="1.6"><path d="M164 15h8a4.5 4.5 0 0 1 0 9h-1"/><path d="M168 11l-4.5 4 4.5 4"/></g>
<path d="M183 15h5l-2.5 2.5z" fill="#6b8cc2"/>
<!-- redo -->
<path d="M201.7 11A6.1 6.1 0 1 0 208.6 12.2L206.3 10.7" fill="none" stroke="#fff" stroke-width="1.7"/>
<path d="M211.2 10.6H205.7V15.8" fill="none" stroke="#fff" stroke-width="1.6"/>
<!-- touch -->
<circle cx="229" cy="12.4" r="3.4" fill="none" stroke="#eee" stroke-width="1.7"/>
<path d="M227.2 13a1.6 1.6 0 0 1 3.2 0v5.8l3.6 1c1.3.4 1.8 1.2 1.7 2.4l-.3 2.8h-7.2l-3.8-4.6c-.6-.8 0-1.8 1-1.5l1.8 1.1z" fill="#eee"/>
<path d="M244 15.5h5.5l-2.75 2.8z" fill="#fff"/>
<!-- print preview -->
<path d="M261.5 14.5h5.5v3h8.5a1 1 0 0 1 1 1v3.5a1 1 0 0 1-1 1h-14a1 1 0 0 1-1-1v-6.5a1 1 0 0 1 1-1z" fill="#eee"/>
<rect x="264.8" y="20" width="7.8" height="4.6" fill="#2b579a" stroke="#eee" stroke-width="1.2"/>
<path d="M265.5 10.3h-1.2v3.6h1.2" fill="none" stroke="#eee" stroke-width="1"/>
<circle cx="271.4" cy="13.3" r="5" fill="#2b579a"/><circle cx="271.4" cy="13.3" r="4.2" fill="#eee"/>
<path d="M269.2 13.4l1.6 1.6 2.8-3.1" fill="none" stroke="#2b579a" stroke-width="1.2"/>
<circle cx="274.3" cy="20.5" r=".6" fill="#2b579a"/>
<!-- customize -->
<path d="M294 13.6h5.6M294 16h5.6l-2.8 3.3z" stroke="#fff" stroke-width="1.1" fill="#fff"/>
<!-- window buttons -->
<g fill="none" stroke="#8ea5cc" stroke-width="1">
<rect x="1112.5" y="10.5" width="12" height="9.5"/><path d="M1112.5 12.5h12M1118.5 19.5v-5.5M1116 16.5l2.5-2.5 2.5 2.5"/>
<path d="M1159 15.5h10.5"/>
<rect x="1205.5" y="12.5" width="8" height="8"/><path d="M1207.5 12.5v-2h8v8h-2"/>
<path d="M1251 10l10 10M1261 10l-10 10"/>
</g>
<!-- bulb -->
<g fill="none" stroke="#fff" stroke-width="1.2"><path d="M697 51.5c0-3-3.3-4.5-3.3-8a5.8 5.8 0 0 1 11.6 0c0 3.5-3.3 5-3.3 8z"/><path d="M697 53.6h5M697.8 55.6h3.4"/></g>
<!-- share box -->
<rect x="1119.5" y="33.5" width="72" height="29" fill="#3d6bb3" stroke="#ed1c24" stroke-width="5"/>
<g fill="none" stroke="#fff" stroke-width="1.2"><path d="M1129.5 46.5v8h13.5v-2.5"/><path d="M1132.5 53c0.3-4.5 2.8-6.5 7.3-6.5v2.8l4.8-4.3-4.8-4.3v2.8c-5 0-7.6 3.5-7.3 9.5z"/></g>
<!-- history -->
<g fill="none" stroke="#fff" stroke-width="1.4"><path d="M1205.5 43.5a7.8 7.8 0 1 1-1.6 5"/><path d="M1204 40.5v4.5h4.5"/><path d="M1211.5 44v5l3 3"/></g>
<!-- comment -->
<path d="M1249.5 41.5h15v10.5h-9.5l-3.5 3.3v-3.3h-2z" fill="none" stroke="#fff" stroke-width="1.3"/>
</svg>
<svg style="left:0;top:0" width="1" height="1"><path d="M786.5 15h5l-2.5 2.5z" fill="#dbe3ef"/></svg>
<svg style="left:0;top:64px" width="1281" height="93" viewBox="0 64 1281 93">
<g fill="#d4d4d4">
<rect x="157" y="68" width="1" height="84"/><rect x="420" y="68" width="1" height="84"/><rect x="645" y="68" width="1" height="84"/><rect x="1107" y="68" width="1" height="84"/><rect x="1186" y="68" width="1" height="84"/>
<rect x="347" y="76" width="1" height="21"/><rect x="389" y="76" width="1" height="21"/><rect x="310" y="107" width="1" height="21"/>
<rect x="530" y="76" width="1" height="21"/><rect x="614" y="76" width="1" height="21"/><rect x="517" y="107" width="1" height="21"/><rect x="559" y="107" width="1" height="21"/>
</g>
<!-- dialog launchers -->
<g fill="none" stroke="#777" stroke-width="1">
<path d="M146.5 151.5v-6h6M149 148l3.5 3.5M152.5 149v2.5h-2.5"/>
<path d="M409.5 151.5v-6h6M412 148l3.5 3.5M415.5 149v2.5h-2.5"/>
<path d="M634.5 151.5v-6h6M637 148l3.5 3.5M640.5 149v2.5h-2.5"/>
<path d="M1096.5 151.5v-6h6M1099 148l3.5 3.5M1102.5 149v2.5h-2.5"/>
</g>
<!-- paste -->
<rect x="13" y="75" width="24" height="25" rx="1.5" fill="#ebc177"/>
<path d="M17.5 79.3v-3.5h4.6v-1.2a2.9 2.9 0 0 1 5.8 0v1.2h4.6v3.5z" fill="#6d6d6d" stroke="#f3f3f3" stroke-width="0.7"/>
<circle cx="25" cy="74.4" r="0.9" fill="#f3f3f3"/>
<path d="M27.5 83.3h8.5l4.5 4.5v14h-13z" fill="#fff" stroke="#707070" stroke-width="1"/>
<path d="M35.8 83.3v4.7h4.7" fill="#f3f3f3" stroke="#707070" stroke-width="0.9"/>
<path d="M22 127h5l-2.5 2.6z" fill="#666"/>
<!-- cut -->
<g fill="none" stroke="#b1b1b1" stroke-width="1.2"><circle cx="52.8" cy="82.2" r="2.4"/><circle cx="61.2" cy="82.2" r="2.4"/><path d="M54 80.2l6.8-9.7M60 80.2l-6.8-9.7"/></g>
<!-- copy -->
<g fill="#fff" stroke="#a8a8a8" stroke-width="1"><path d="M49.5 104.5v-10h5.5l2 2v8z"/><path d="M55.5 97.5h6l2.5 2.5v7.5h-8.5z"/></g>
<g stroke="#a8a8a8" stroke-width="1"><path d="M51 97.5h2.5M51 100h3.5M51 102.5h3.5M57 100.5h5M57 103h5M57 105.5h5"/></g>
<!-- format painter -->
<path d="M49.3 123.5l5.5-2 4.6 4.6-5.2 4.5z" fill="#e8bb6e"/>
<path d="M55.8 120.6l4.2-3.6 4.2 4.2-3.6 4.2z" fill="#6d6d6d"/>
<path d="M61.8 116.6l2.6-2.6 2.2 2.2-2.6 2.6z" fill="#6d6d6d"/>
<!-- font boxes -->
<rect x="162.5" y="75.5" width="94" height="22.5" fill="#fff" stroke="#c6c6c6"/>
<rect x="256.5" y="75.5" width="42.5" height="22.5" fill="#fff" stroke="#c6c6c6"/>
<g fill="#666">
<path d="M246 85.5h5l-2.5 2.5z"/><path d="M289.3 85.5h5l-2.5 2.5z"/>
<path d="M231 116.5h5l-2.5 2.5z"/><path d="M338 116.5h5l-2.5 2.5z"/><path d="M373 116.5h5l-2.5 2.5z"/><path d="M407 116.5h5l-2.5 2.5z"/>
<path d="M375 85.5h5.5l-2.75 2.5z"/><path d="M450 85.5h5l-2.5 2.5z"/><path d="M484 85.5h5l-2.5 2.5z"/><path d="M516 85.5h5l-2.5 2.5z"/>
<path d="M545 116.5h5l-2.5 2.5z"/><path d="M589 116.5h5l-2.5 2.5z"/><path d="M623 116.5h5l-2.5 2.5z"/>
</g>
<!-- B I U abc x2 -->
<g fill="#505050">
<path d="M168 112h4.3c2.3 0 3.6 1 3.6 2.3 0 1-.6 1.7-1.6 2 1.3.3 2 1.2 2 2.3 0 1.6-1.4 2.5-3.6 2.5H168zm2.2 1.7v2h1.8c.9 0 1.5-.3 1.5-1s-.6-1-1.5-1zm0 3.6v2.3h2c1 0 1.6-.4 1.6-1.1s-.6-1.2-1.6-1.2z"/>
<path d="M192.5 112h5.5v1.2h-1.8l-1.4 6.6h1.7v1.2h-5.5v-1.2h1.8l1.4-6.6h-1.7z"/>
<path d="M212.7 112h1.8v5.2c0 1.6.8 2.4 2 2.4s2-.8 2-2.4V112h1.8v5.2c0 2.7-1.5 3.9-3.8 3.9s-3.8-1.2-3.8-3.9z"/><rect x="212" y="122" width="9" height="1"/>
</g>
<text x="243" y="121" font-family="Liberation Sans" font-size="10.5" fill="#505050" letter-spacing="-0.6">abc</text>
<rect x="243" y="117" width="16" height="1" fill="#505050"/>
<path d="M267.5 114l5.5 7M273 114l-5.5 7" stroke="#505050" stroke-width="2"/>
<text x="275.2" y="124" font-family="Liberation Sans" font-size="6" font-weight="bold" fill="#3f7fc0">2</text>
<path d="M289 114l5.5 7M294.5 114l-5.5 7" stroke="#505050" stroke-width="2"/>
<text x="297" y="116" font-family="Liberation Sans" font-size="6" font-weight="bold" fill="#3f7fc0">2</text>
<!-- grow/shrink -->
<path d="M305.6 91.75l3.6-9.6h1.6l3.6 9.6h-1.6l-.9-2.5h-3.8l-.9 2.5zm3-3.8h2.9l-1.45-4z" fill="#505050"/>
<path d="M313 81.5l2.5-2.5 2.5 2.5z" fill="#3f7fc0"/>
<path d="M328 91.75l3-7.2h1.6l3 7.2h-1.5l-.7-1.9h-3.2l-.7 1.9zm2.6-3h2.4l-1.2-3.2z" fill="#505050"/>
<path d="M335 79h5l-2.5 2.5z" fill="#3f7fc0"/>
<text x="354.5" y="90.2" font-family="Liberation Sans" font-size="12.5" fill="#505050" letter-spacing="-0.5">Aa</text>
<!-- clear formatting -->
<text x="398.5" y="88" font-family="Liberation Sans" font-size="10" fill="#505050">A</text>
<path d="M403 89l6-6.5 4 3.5-6 6.5z" fill="#e58a9a"/><path d="M401.5 90.5l1.5-1.5 4 3.5-1.5 1.5z" fill="#e58a9a" opacity=".8"/>
<!-- text effects -->
<path d="M319.5 122.5l4.7-12.5h2.5l4.7 12.5h-2.5l-1.2-3.2h-4.5l-1.2 3.2zm4.3-5.2h3.1l-1.55-4.3z" fill="#fff" stroke="#3f7fc0" stroke-width="1.2"/>
<!-- highlight -->
<text x="351" y="117.5" font-family="Liberation Sans" font-size="8.5" font-weight="bold" fill="#505050" letter-spacing="-0.5">ab</text>
<path d="M358 120l7-8.5 1.5 1.3-7 8.5z" fill="#505050"/>
<rect x="351" y="121" width="16" height="4" fill="#ffff00"/>
<!-- font color -->
<path d="M388.6 120.5l3.7-10h2.4l3.7 10h-2.1l-.9-2.6h-3.8l-.9 2.6zm3.5-4.3h2.8l-1.4-4z" fill="#505050"/>
<rect x="385" y="121" width="16" height="4" fill="#ff0000"/>
<!-- bullets -->
<g fill="#3f7fc0"><circle cx="430.6" cy="79.5" r="1.3"/><circle cx="430.6" cy="85.5" r="1.3"/><circle cx="430.6" cy="91.5" r="1.3"/></g>
<g fill="#666"><rect x="434" y="79" width="8.5" height="1.2"/><rect x="434" y="85" width="8.5" height="1.2"/><rect x="434" y="91" width="8.5" height="1.2"/>
<rect x="468" y="79" width="9" height="1.2"/><rect x="468" y="85" width="9" height="1.2"/><rect x="468" y="91" width="9" height="1.2"/>
<rect x="501" y="79" width="11" height="1.2"/><rect x="506" y="85" width="6" height="1.2"/><rect x="509" y="91" width="3" height="1.2"/></g>
<text x="462.5" y="81.8" font-family="Liberation Sans" font-size="5" font-weight="bold" fill="#3f7fc0">1</text>
<text x="462.5" y="87.8" font-family="Liberation Sans" font-size="5" font-weight="bold" fill="#3f7fc0">2</text>
<text x="462.5" y="93.8" font-family="Liberation Sans" font-size="5" font-weight="bold" fill="#3f7fc0">3</text>
<text x="495.5" y="81.8" font-family="Liberation Sans" font-size="5" font-weight="bold" fill="#3f7fc0">1</text>
<text x="499.5" y="87.8" font-family="Liberation Sans" font-size="5" font-weight="bold" fill="#3f7fc0">a</text>
<text x="504.5" y="93.8" font-family="Liberation Sans" font-size="5" font-weight="bold" fill="#3f7fc0">i</text>
<!-- indent -->
<g fill="#666"><rect x="538" y="79" width="16.5" height="1.2"/><rect x="544.5" y="83" width="10" height="1.2"/><rect x="544.5" y="87" width="10" height="1.2"/><rect x="538" y="91" width="16.5" height="1.2"/>
<rect x="560" y="79" width="16.5" height="1.2"/><rect x="566.5" y="83" width="10" height="1.2"/><rect x="566.5" y="87" width="10" height="1.2"/><rect x="560" y="91" width="16.5" height="1.2"/></g>
<path d="M538.3 85.5l3.4-3.3v2.3h2.5v2h-2.5v2.3z" fill="#3f7fc0"/>
<path d="M565.5 85.5l-3.4-3.3v2.3h-2.1v2h2.1v2.3z" fill="#3f7fc0"/>
<!-- sort -->
<text x="592.5" y="85.3" font-family="Liberation Sans" font-size="8" font-weight="bold" fill="#3f7fc0">A</text>
<text x="593" y="93.4" font-family="Liberation Sans" font-size="8" font-weight="bold" fill="#8e56b5">Z</text>
<path d="M603.5 78v14M600.8 89.3l2.7 3 2.7-3" fill="none" stroke="#505050" stroke-width="1.1"/>
<!-- pilcrow -->
<path d="M629 80h6v1.3h-1.2v10.5h-1.3V81.3h-1.2v10.5H630v-5.5c-3 0-5-1.4-5-3.2s2-3.1 4-3.1z" fill="#666"/>
<!-- align -->
<rect x="425" y="106" width="22" height="23" fill="#c5c5c5"/>
<g fill="#555">
<rect x="429" y="112" width="14" height="1"/><rect x="429" y="115" width="10" height="1"/><rect x="429" y="118" width="14" height="1"/><rect x="429" y="121" width="10" height="1"/>
<rect x="451" y="112" width="14" height="1"/><rect x="453" y="115" width="10" height="1"/><rect x="451" y="118" width="14" height="1"/><rect x="453" y="121" width="10" height="1"/>
<rect x="473" y="112" width="14" height="1"/><rect x="477" y="115" width="10" height="1"/><rect x="473" y="118" width="14" height="1"/><rect x="477" y="121" width="10" height="1"/>
<rect x="495" y="112" width="14" height="1"/><rect x="495" y="115" width="14" height="1"/><rect x="495" y="118" width="14" height="1"/><rect x="495" y="121" width="14" height="1"/>
<rect x="532" y="112" width="8" height="1"/><rect x="532" y="115" width="8" height="1"/><rect x="532" y="118" width="8" height="1"/><rect x="532" y="121" width="8" height="1"/>
</g>
<path d="M528.5 109.5v15M526 112l2.5-2.5 2.5 2.5M526 122l2.5 2.5 2.5-2.5" fill="none" stroke="#3f7fc0" stroke-width="1.1"/>
<!-- shading -->
<path d="M569.5 117.5l5-5 5 5-5 5z" fill="#fff" stroke="#666" stroke-width="1"/><path d="M573 112.5v-3.2h2v3" fill="none" stroke="#666" stroke-width="1"/>
<path d="M580 115c1.8 1 2.4 2.4 1.6 4" fill="none" stroke="#3f7fc0" stroke-width="1.8"/>
<rect x="567.5" y="121.5" width="15.5" height="3.5" fill="#fff" stroke="#777" stroke-width="1"/>
<!-- borders -->
<g fill="#777"><path d="M602 110h13.5v1h-13.5zM602 110h1v13h-1zM614.5 110h1v13h-1zM608.3 110h1v13h-1zM602 116h13.5v1h-13.5z" opacity=".55"/><rect x="602" y="122" width="13.5" height="1"/></g>
<!-- styles gallery -->
<rect x="651.5" y="70.5" width="448" height="59" fill="#fff" stroke="#c6c6c6"/>
<rect x="654" y="74" width="68" height="51.5" fill="#fff" stroke="#c6c6c6" stroke-width="4"/>
<rect x="1085.5" y="70.5" width="14" height="59" fill="#fff" stroke="#c6c6c6"/>
<rect x="1086" y="71" width="13" height="20.5" fill="#e6e6e6"/>
<path d="M1085.5 91.5h14M1085.5 110.5h14" stroke="#c6c6c6"/>
<path d="M1090 83.5h5l-2.5-2.5z" fill="#c6c6c6"/>
<path d="M1090 100h5l-2.5 2.5z" fill="#666"/>
<path d="M1090 117.5h5M1090 119.5h5l-2.5 2.5z" fill="#666" stroke="#666" stroke-width=".6"/>
<!-- find / replace / select -->
<circle cx="1124.5" cy="77" r="4" fill="none" stroke="#3f7fc0" stroke-width="1.7"/>
<path d="M1121.5 80l-4.8 4.3" stroke="#3f7fc0" stroke-width="2.5"/>
<path d="M1166.8 77h5l-2.5 2.7z" fill="#666"/><path d="M1168 125h5l-2.5 2.5z" fill="#666"/>
<text x="1114.8" y="101.5" font-family="Liberation Sans" font-size="10" fill="#505050" stroke="#505050" stroke-width=".25" letter-spacing="-0.4">a</text>
<text x="1120.3" y="101.5" font-family="Liberation Sans" font-size="10" fill="#8e56b5" stroke="#8e56b5" stroke-width=".25">b</text>
<text x="1119" y="108.8" font-family="Liberation Sans" font-size="10.5" fill="#505050" stroke="#505050" stroke-width=".25" letter-spacing="-0.5">a</text>
<text x="1124.6" y="108.8" font-family="Liberation Sans" font-size="10.5" fill="#3f7fc0" stroke="#3f7fc0" stroke-width=".25">c</text>
<path d="M1115.8 102.5v3.5h2.6M1117.3 104.6l1.5 1.4-1.5 1.4" fill="none" stroke="#3f7fc0" stroke-width="1"/>
<path d="M1119.5 116.5v12l2.8-2.8 2.2 4.6 1.8-.9-2.2-4.4h3.8z" fill="#fff" stroke="#555" stroke-width="1"/>
<path d="M1261.5 151l4.2-4.2 4.2 4.2" fill="none" stroke="#666" stroke-width="1.6"/>
</svg>
<svg style="left:0;top:0" width="1" height="1">
<rect x="1032" y="963" width="38" height="21" fill="#c6c6c6"/>
<g fill="none" stroke="#6d6d6d" stroke-width="1">
<path d="M1006.5 976.5v-10h5.5l.5.6.5-.6h5.5v10h-5.5l-.5.6-.5-.6z"/><path d="M1012.5 967v11.5"/>
<path d="M1008 968.5h3M1008 970.5h3M1008 972.5h3M1008 974.5h3M1014 968.5h3M1014 970.5h3M1014 972.5h3M1014 974.5h3"/>
<rect x="1044.5" y="966.5" width="13" height="12"/><path d="M1046 968.5h10M1046 970.5h10M1046 972.5h10M1046 974.5h10M1046 976.5h10"/>
<path d="M1086.5 976.5h-4v-10h11.5v3.5M1084 968.5h8M1084 970.5h6M1084 972.5h3.5M1084 974.5h3"/>
</g>
<circle cx="1092.1" cy="974.9" r="3.8" fill="#f3f3f3" stroke="#6d6d6d" stroke-width="1.1"/>
<path d="M1090 972.5c1.2.5 1.5 1.5 1 2.5s.5 2 1.5 2.5M1093.5 972c0 1.5 1 2 2 2" fill="none" stroke="#6d6d6d" stroke-width="1.2"/>
<rect x="1112.5" y="972" width="6" height="1.3" fill="#444"/>
<rect x="1122.5" y="972" width="100" height="1" fill="#999"/>
<rect x="1171" y="966" width="5" height="12" fill="#666"/>
<path d="M1226 972.6h7M1229.5 969v7.2" stroke="#444" stroke-width="1.3"/>
</svg>
<div class="a" style="left:22.20px;top:10.65px;font-size:12.3px;line-height:12.3px;color:#fff;font-weight:400;font-family:'Liberation Sans',sans-serif;letter-spacing:-0.300px;">AutoSave</div>
<div class="a" style="left:486.70px;top:10.04px;font-size:12.3px;line-height:12.3px;color:#dbe3ef;font-weight:400;font-family:'Liberation Sans',sans-serif;letter-spacing:-0.417px;">MTC Word Doc Nov 22  -  Last Saved 2/20/2019 2:28 PM</div>
<div class="a" style="left:975.20px;top:10.65px;font-size:12.3px;line-height:12.3px;color:#dbe3ef;font-weight:400;font-family:'Liberation Sans',sans-serif;letter-spacing:-0.270px;">Stephanie</div>
<div class="a" style="left:19.70px;top:43.30px;font-size:12.3px;line-height:12.3px;color:#fff;font-weight:400;font-family:'Liberation Sans',sans-serif;letter-spacing:-0.366px;">File</div>
<div class="a" style="left:72.20px;top:43.30px;font-size:12.3px;line-height:12.3px;color:#2b579a;font-weight:400;font-family:'Liberation Sans',sans-serif;letter-spacing:0.473px;">Home</div>
<div class="a" style="left:132.20px;top:43.30px;font-size:12.3px;line-height:12.3px;color:#fff;font-weight:400;font-family:'Liberation Sans',sans-serif;letter-spacing:-0.107px;">Insert</div>
<div class="a" style="left:188.70px;top:43.30px;font-size:12.3px;line-height:12.3px;color:#fff;font-weight:400;font-family:'Liberation Sans',sans-serif;letter-spacing:-0.324px;">Draw</div>
<div class="a" style="left:242.95px;top:43.30px;font-size:12.3px;line-height:12.3px;color:#fff;font-weight:400;font-family:'Liberation Sans',sans-serif;letter-spacing:-0.410px;">Design</div>
<div class="a" style="left:305.45px;top:43.30px;font-size:12.3px;line-height:12.3px;color:#fff;font-weight:400;font-family:'Liberation Sans',sans-serif;letter-spacing:0.012px;">Layout</div>
<div class="a" style="left:368.70px;top:43.30px;font-size:12.3px;line-height:12.3px;color:#fff;font-weight:400;font-family:'Liberation Sans',sans-serif;letter-spacing:-0.546px;">References</div>
<div class="a" style="left:452.95px;top:43.30px;font-size:12.3px;line-height:12.3px;color:#fff;font-weight:400;font-family:'Liberation Sans',sans-serif;letter-spacing:0.053px;">Mailings</div>
<div class="a" style="left:524.70px;top:43.30px;font-size:12.3px;line-height:12.3px;color:#fff;font-weight:400;font-family:'Liberation Sans',sans-serif;letter-spacing:-0.520px;">Review</div>
<div class="a" style="left:588.45px;top:43.30px;font-size:12.3px;line-height:12.3px;color:#fff;font-weight:400;font-family:'Liberation Sans',sans-serif;letter-spacing:-0.236px;">View</div>
<div class="a" style="left:640.45px;top:43.30px;font-size:12.3px;line-height:12.3px;color:#fff;font-weight:400;font-family:'Liberation Sans',sans-serif;letter-spacing:0.144px;">Help</div>
<div class="a" style="left:710.95px;top:43.30px;font-size:12.3px;line-height:12.3px;color:#fff;font-weight:400;font-family:'Liberation Sans',sans-serif;letter-spacing:-0.010px;">Tell me what you want to do</div>
<div class="a" style="left:1151.20px;top:42.75px;font-size:12.3px;line-height:12.3px;color:#fff;font-weight:400;font-family:'Liberation Sans',sans-serif;letter-spacing:-0.650px;">Share</div>
<div class="a" style="left:10.80px;top:106.80px;font-size:12.3px;line-height:12.3px;color:#262626;font-weight:400;font-family:'Liberation Sans',sans-serif;letter-spacing:-0.706px;">Paste</div>
<div class="a" style="left:67.70px;top:72.80px;font-size:12.3px;line-height:12.3px;color:#b1b1b1;font-weight:400;font-family:'Liberation Sans',sans-serif;letter-spacing:0.245px;">Cut</div>
<div class="a" style="left:67.70px;top:95.64px;font-size:12.3px;line-height:12.3px;color:#b1b1b1;font-weight:400;font-family:'Liberation Sans',sans-serif;letter-spacing:-0.130px;">Copy</div>
<div class="a" style="left:67.70px;top:119.05px;font-size:12.3px;line-height:12.3px;color:#262626;font-weight:400;font-family:'Liberation Sans',sans-serif;letter-spacing:-0.200px;">Format Painter</div>
<div class="a" style="left:44.80px;top:142.14px;font-size:12.3px;line-height:12.3px;color:#262626;font-weight:400;font-family:'Liberation Sans',sans-serif;letter-spacing:-0.176px;">Clipboard</div>
<div class="a" style="left:268.95px;top:142.04px;font-size:12.3px;line-height:12.3px;color:#262626;font-weight:400;font-family:'Liberation Sans',sans-serif;letter-spacing:-0.043px;">Font</div>
<div class="a" style="left:497.95px;top:142.04px;font-size:12.3px;line-height:12.3px;color:#262626;font-weight:400;font-family:'Liberation Sans',sans-serif;letter-spacing:-0.545px;">Paragraph</div>
<div class="a" style="left:853.50px;top:142.04px;font-size:12.3px;line-height:12.3px;color:#262626;font-weight:400;font-family:'Liberation Sans',sans-serif;letter-spacing:-0.454px;">Styles</div>
<div class="a" style="left:1127.70px;top:142.04px;font-size:12.3px;line-height:12.3px;color:#262626;font-weight:400;font-family:'Liberation Sans',sans-serif;letter-spacing:-0.063px;">Editing</div>
<div class="a" style="left:1133.60px;top:72.64px;font-size:12.3px;line-height:12.3px;color:#262626;font-weight:400;font-family:'Liberation Sans',sans-serif;letter-spacing:-0.231px;">Find</div>
<div class="a" style="left:1133.60px;top:95.84px;font-size:12.3px;line-height:12.3px;color:#262626;font-weight:400;font-family:'Liberation Sans',sans-serif;letter-spacing:-0.549px;">Replace</div>
<div class="a" style="left:1133.60px;top:118.95px;font-size:12.3px;line-height:12.3px;color:#262626;font-weight:400;font-family:'Liberation Sans',sans-serif;letter-spacing:-0.552px;">Select</div>
<div class="a" style="left:7.20px;top:966.54px;font-size:12.3px;line-height:12.3px;color:#444;font-weight:400;font-family:'Liberation Sans',sans-serif;letter-spacing:-0.468px;">Page 1 of 1</div>
<div class="a" style="left:95.20px;top:966.54px;font-size:12.3px;line-height:12.3px;color:#444;font-weight:400;font-family:'Liberation Sans',sans-serif;letter-spacing:-0.311px;">63 words</div>
<div class="a" style="left:161.70px;top:966.54px;font-size:12.3px;line-height:12.3px;color:#444;font-weight:400;font-family:'Liberation Sans',sans-serif;letter-spacing:-0.411px;">English (United States)</div>
<div class="a" style="left:1244.20px;top:966.54px;font-size:12.3px;line-height:12.3px;color:#444;font-weight:400;font-family:'Liberation Sans',sans-serif;letter-spacing:-1.408px;">100%</div>
<div class="a" style="left:85.50px;top:11.15px;font-size:11px;line-height:11px;color:#2b579a;font-weight:400;font-family:'Liberation Sans',sans-serif;letter-spacing:-2.088px;">On</div>
<div class="a" style="left:164.80px;top:80.45px;font-size:13px;line-height:13px;color:#262626;font-weight:400;font-family:'Liberation Sans',sans-serif;letter-spacing:-0.527px;">Calibri (Body)</div>
<div class="a" style="left:258.95px;top:80.45px;font-size:13px;line-height:13px;color:#262626;font-weight:400;font-family:'Liberation Sans',sans-serif;letter-spacing:-1.950px;">11</div>
<div class="a" style="left:657.70px;top:86.40px;font-size:13.3px;line-height:13.3px;color:#000;font-weight:400;font-family:'Liberation Sans',sans-serif;letter-spacing:-0.729px;">AaBbCcDc</div>
<div class="a" style="left:662.00px;top:110.84px;font-size:12.3px;line-height:12.3px;color:#444;font-weight:400;font-family:'Liberation Sans',sans-serif;letter-spacing:0.039px;">¶ Normal</div>
<div class="a" style="left:730.00px;top:86.40px;font-size:13.3px;line-height:13.3px;color:#000;font-weight:400;font-family:'Liberation Sans',sans-serif;letter-spacing:-0.814px;">AaBbCcDc</div>
<div class="a" style="left:728.50px;top:110.84px;font-size:12.3px;line-height:12.3px;color:#444;font-weight:400;font-family:'Liberation Sans',sans-serif;letter-spacing:-0.482px;">¶ No Spac...</div>
<div class="a" style="left:801.90px;top:83.65px;font-size:18.3px;line-height:18.3px;color:#2e74b5;font-weight:400;font-family:'Liberation Sans',sans-serif;letter-spacing:-1.430px;-webkit-text-stroke:0.35px #fff;">AaBbCc</div>
<div class="a" style="left:804.40px;top:110.84px;font-size:12.3px;line-height:12.3px;color:#444;font-weight:400;font-family:'Liberation Sans',sans-serif;letter-spacing:-0.231px;">Heading 1</div>
<div class="a" style="left:873.80px;top:84.10px;font-size:16px;line-height:16px;color:#2e74b5;font-weight:400;font-family:'Liberation Sans',sans-serif;letter-spacing:-1.642px;-webkit-text-stroke:0.3px #fff;">AaBbCcD</div>
<div class="a" style="left:876.60px;top:110.84px;font-size:12.3px;line-height:12.3px;color:#444;font-weight:400;font-family:'Liberation Sans',sans-serif;letter-spacing:-0.131px;">Heading 2</div>
<div class="a" style="left:946.30px;top:72.00px;font-size:32px;line-height:32px;color:#000;font-weight:400;font-family:'Liberation Sans',sans-serif;letter-spacing:-1.142px;-webkit-text-stroke:0.35px #fff;clip-path:inset(7px 0 0 0);">AaB</div>
<div class="a" style="left:964.10px;top:110.84px;font-size:12.3px;line-height:12.3px;color:#444;font-weight:400;font-family:'Liberation Sans',sans-serif;letter-spacing:0.137px;">Title</div>
<div class="a" style="left:1018.00px;top:86.73px;font-size:12.9px;line-height:12.9px;color:#5a5a5a;font-weight:400;font-family:'Liberation Sans',sans-serif;letter-spacing:0.530px;">AaBbCcD</div>
<div class="a" style="left:1027.40px;top:110.84px;font-size:12.3px;line-height:12.3px;color:#444;font-weight:400;font-family:'Liberation Sans',sans-serif;letter-spacing:-0.014px;">Subtitle</div>
</body></html>
